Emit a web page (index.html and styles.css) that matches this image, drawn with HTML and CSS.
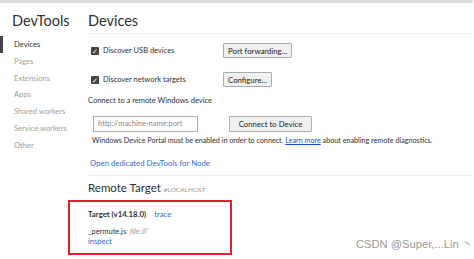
FILE: index.html
```html
<!DOCTYPE html>
<html lang="en">
<head>
  <meta charset="UTF-8" />
  <title>DevTools - Devices</title>
  <link rel="stylesheet" href="styles.css">
</head>
<body>

<div class="topbar"></div>

<div class="page">
  <nav class="sidebar">
    <div class="brand">DevTools</div>
    <ul class="nav">
      <li class="active">Devices</li>
      <li>Pages</li>
      <li>Extensions</li>
      <li>Apps</li>
      <li>Shared workers</li>
      <li>Service workers</li>
      <li>Other</li>
    </ul>
  </nav>

  <main class="content">
    <h1 class="title">Devices</h1>

    <div class="options">
      <div class="option-row">
        <label class="check"><span class="box">&#10003;</span>Discover USB devices</label>
        <button class="btn">Port forwarding...</button>
      </div>
      <div class="option-row">
        <label class="check"><span class="box">&#10003;</span>Discover network targets</label>
        <button class="btn">Configure...</button>
      </div>
    </div>

    <p class="section-label">Connect to a remote Windows device</p>
    <div class="connect-row">
      <input class="url-input" type="text" placeholder="http://machine-name:port">
      <button class="btn">Connect to Device</button>
    </div>
    <p class="note">Windows Device Portal must be enabled in order to connect. <a href="#">Learn more</a> about enabling remote diagnostics.</p>

    <a class="node-link" href="#">Open dedicated DevTools for Node</a>

    <h2 class="remote-title">Remote Target <span class="host">#LOCALHOST</span></h2>

    <div class="target">
      <div class="target-head"><b>Target (v14.18.0)</b> <a href="#">trace</a></div>
      <div class="target-file">_permute.js <span class="url">file:///</span></div>
      <a class="inspect" href="#">inspect</a>
    </div>
  </main>
</div>

<div class="watermark">CSDN @Super,...Lin 丶</div>

</body>
</html>
```

FILE: styles.css
```css
body {
  margin: 0;
  font-family: Lato, "Open Sans", sans-serif;
  color: #303030;
  background: #fff;
  width: 474px;
  height: 259px;
  overflow: hidden;
  position: relative;
}

.topbar {
  height: 3px;
  background: #dcdcdc;
  margin-right: 1px;
}

.page {
  display: flex;
}

.sidebar {
  width: 88px;
  flex-shrink: 0;
}

.brand {
  font-size: 14.5px;
  line-height: 36px;
  height: 33px;
  padding-left: 12px;
  color: #333;
}

.nav {
  list-style: none;
  margin: 0;
  padding: 0;
  font-size: 7.6px;
}

.nav li {
  height: 16.8px;
  line-height: 16.8px;
  padding-left: 11px;
  color: #a0a0a0;
  border-left: 3px solid transparent;
}

.nav li.active {
  color: #333;
  border-left-color: #464646;
}

.content {
  flex: 1;
  padding-right: 2px;
}

.title {
  font-weight: normal;
  font-size: 14.5px;
  margin: 0;
  height: 30px;
  line-height: 36px;
  border-bottom: 1px solid #eee;
}

.options {
  padding-top: 2px;
}

.option-row {
  display: flex;
  align-items: center;
  height: 29px;
  padding-left: 3px;
}

.check {
  display: flex;
  align-items: center;
  width: 132px;
  font-size: 7.5px;
}

.box {
  width: 8px;
  height: 8px;
  background: #444;
  color: #fff;
  font-size: 7px;
  line-height: 8px;
  text-align: center;
  border-radius: 1px;
  margin-right: 4px;
}

.btn {
  font-family: inherit;
  font-size: 7.8px;
  color: #222;
  background: #f0f0f0;
  border: 1px solid #adadad;
  padding: 0 4px;
  height: 15px;
  border-radius: 1px;
}

.section-label {
  font-size: 7.5px;
  margin: 0;
  height: 21px;
  line-height: 14px;
}

.connect-row {
  display: flex;
  align-items: center;
  gap: 31px;
  padding-left: 5px;
  height: 17px;
}

.url-input {
  box-sizing: border-box;
  width: 105px;
  height: 16px;
  border: 1px solid #b0b0b0;
  padding: 0 4px;
  font-family: inherit;
  font-size: 7.5px;
}

.url-input::placeholder {
  color: #888;
}

.connect-row .btn {
  width: 83px;
  height: 16px;
}

.note {
  font-size: 7.2px;
  margin: 0;
  padding: 4px 0 0 4px;
  line-height: 10px;
}

.note a {
  color: #1a55d6;
}

.node-link {
  display: block;
  font-size: 7.8px;
  color: #2f6ccf;
  text-decoration: none;
  padding: 12px 0 7px 2px;
  line-height: 10px;
  border-bottom: 1px solid #eee;
}

.remote-title {
  font-weight: normal;
  font-size: 11.5px;
  margin: 0;
  padding-top: 5px;
  line-height: 14px;
}

.host {
  font-size: 6.5px;
  color: #999;
}

.target {
  margin: 3px 0 0 -20px;
  width: 142px;
  height: 51px;
  border: 2px solid #e0242c;
  padding-left: 18px;
  font-size: 7.8px;
}

.target-head {
  padding-top: 7px;
  line-height: 10px;
}

.target-head b {
  font-weight: bold;
}

.target-head a {
  color: #2f6ccf;
  text-decoration: none;
  margin-left: 6px;
}

.target-file {
  margin-top: 8px;
  font-size: 7.5px;
  line-height: 10px;
}

.target-file .url {
  color: #999;
  font-style: italic;
  margin-left: 2px;
}

.inspect {
  display: block;
  font-size: 7.5px;
  line-height: 10px;
  color: #2f6ccf;
  text-decoration: none;
}

.watermark {
  position: absolute;
  right: 1px;
  bottom: 8px;
  font-family: "Liberation Sans", "Noto Sans CJK SC", sans-serif;
  font-size: 11.2px;
  color: #9a9a9a;
}
```
